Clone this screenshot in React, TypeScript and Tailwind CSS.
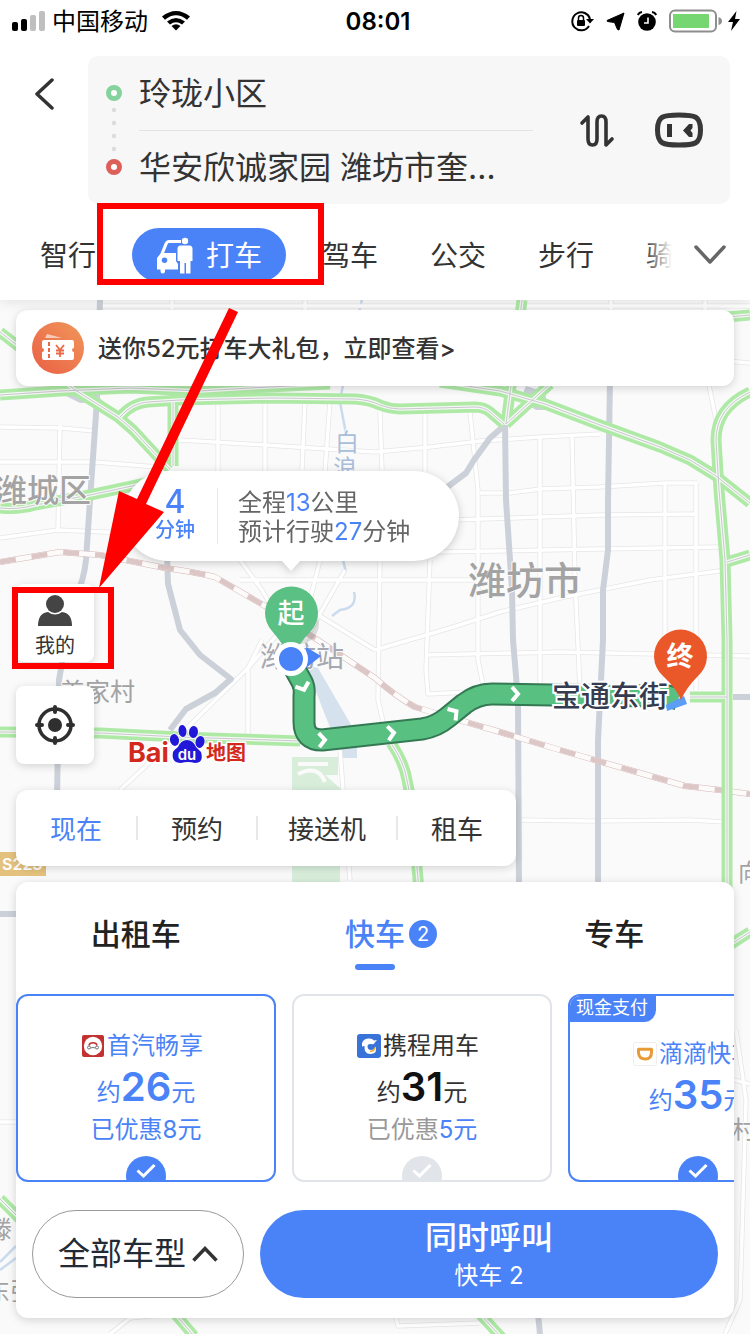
import { useState } from 'react'
import type { ReactNode } from 'react'
import { clsx } from 'clsx'

const ROUTE = 'M291 662 L302 682 Q305 688 304 696 L304 722 Q304 740 322 740 L422 729 Q436 727 448 717 L464 704 Q477 694 492 694 L552 695 L668 696 L678 699'

// 绿色快速路
const HIGHWAYS = [
  'M0 332 L75 390 L118 417 L133 430 L158 457 L170 469',
  'M0 395 L60 391 L130 388 L200 391 L250 388 L330 384',
  'M440 382 L500 391 L545 404 L600 425 L660 447 L690 460 L716 476 L750 503',
  'M120 417 Q132 403 148 402 L180 400 L270 398 L355 399 Q370 400 380 405 Q390 409 400 409 L475 407 Q484 407 490 412 L504 424',
  'M173 402 L173 466',
  'M506 424 L511 386 L522 300',
  'M506 424 L550 384',
  'M750 392 Q716 408 716 440 L719 490 L725 560 L727 640 L727 890',
  'M0 508 Q18 510 35 505 L90 495 L160 480',
  'M0 732 L100 733 L180 737 L300 741',
  'M690 697 L727 697',
  'M391 743 Q404 762 407 780 L411 800 L419 890',
  'M727 562 L750 555',
  'M727 317 L750 315',
  'M728 946 L750 932',
  'M0 1199 L20 1219',
  'M170 1308 L194 1336',
  'M480 1314 L502 1338',
]

// 灰色主干道
const ARTERIALS = [
  'M100 300 L97 400 L90 500 L86 560 Q84 580 76 596 L66 640 L59 680 L57 800',
  'M167 555 L168 584 L180 630 L200 655 L231 679 L215 693 L186 709 L170 730',
  'M505 425 L506 500 L510 560 L512 590 L513 640 L518 700 L519 890',
  'M610 380 L608 500 L608 550 L603 590 L603 640 L598 740 L598 890',
  'M505 425 L490 438 L474 460 L466 473 L446 488',
  'M733 697 L750 697',
  'M0 914 L18 914',
  'M538 1314 L540 1334',
]

const STREETS = [
  'M100 306 L750 306', 'M172 300 L172 320', 'M305 300 L305 320', 'M611 300 L611 320', 'M705 300 L705 320',
  'M0 427 L60 428 L95 431', 'M0 462 L95 462 L170 468', 'M60 425 L58 530', 'M0 538 L58 530 L150 534',
  'M218 402 L218 472', 'M265 402 L265 472', 'M305 400 L302 470', 'M330 400 L325 472',
  'M180 440 L265 445 L375 452 L430 447 L480 441 L540 437 L600 434',
  'M380 412 L382 470', 'M425 412 L425 472', 'M470 412 L478 490 L478 660 L484 690',
  'M540 436 L540 690', 'M572 435 L573 480 L575 580 L580 690',
  'M480 493 L510 493 L540 489 L600 487 L665 483 L697 483',
  'M455 520 L540 517 L600 515 L697 514', 'M435 552 L600 549 L720 547',
  'M665 483 L665 690', 'M696 483 L696 690',
  'M375 650 L450 628 L500 612 L560 598 L650 580 L727 570',
  'M425 655 L560 652 L750 656', 'M240 580 L375 580 L500 580',
  'M380 560 L378 700 L386 735', 'M430 560 L426 670 L428 694 L470 692',
  'M517 820 L590 821 L690 820 L725 822',
  'M240 560 L262 590 L290 640', 'M320 560 L310 600 L290 640', 'M345 570 L322 610 L300 650',
  'M310 610 L375 650', 'M262 640 L248 668 L248 735', 'M290 620 L248 668 L190 725 L120 790',
  'M340 750 L350 880', 'M0 1122 L18 1122', 'M734 1080 L750 1084', 'M736 1030 L746 1100 L740 1300 L725 1334',
  'M714 360 L750 363', 'M706 370 L716 420',
  'M110 1334 L130 1318 L170 1314', 'M395 1314 L398 1326 L480 1323',
]

const RAIL = 'M0 562 L60 552 L100 555 L165 568 Q195 572 215 577 L265 606 L330 648 L375 678 Q395 696 415 707 L435 713 L500 732 L560 750 L640 773 L685 786 L720 790 L750 794'

const CHEVRONS = [
  { x: 303, y: 687, r: 70 },
  { x: 322, y: 740, r: -3 },
  { x: 391, y: 733, r: -6 },
  { x: 454, y: 713, r: -35 },
  { x: 515, y: 694, r: 0 },
]

const SERVICE_TABS = [
  { label: '现在', width: 'w-30' },
  { label: '预约', width: 'w-30' },
  { label: '接送机', width: 'w-35' },
  { label: '租车', width: 'w-30' },
]

type Car = {
  name: string
  price: number
  off?: number
  tag?: string
  checked: boolean
  logo: ReactNode
}

const CARS: Car[] = [
  { name: '首汽畅享', price: 26, off: 8, checked: true, logo: <ShouqiLogo /> },
  { name: '携程用车', price: 31, off: 5, checked: false, logo: <CtripLogo /> },
  { name: '滴滴快车', price: 35, tag: '现金支付', checked: true, logo: <DidiLogo /> },
]

function ShouqiLogo() {
  return (
    <svg className="size-6 shrink-0" viewBox="0 0 24 24" aria-hidden="true">
      <rect x="1" y="1" width="22" height="22" rx="2" fill="#c2302f" />
      <circle cx="12" cy="12" r="9.200" fill="#fff" />
      <path d="M8 11.500 Q8.500 8.800 12 8.800 Q15.500 8.800 16 11.500" fill="none" stroke="#c2302f" strokeWidth="1.500" />
      <circle cx="8" cy="13.500" r="1.500" fill="none" stroke="#777" />
      <circle cx="16" cy="13.500" r="1.500" fill="none" stroke="#777" />
      <path d="M9.500 14 Q12 13 14.500 14" fill="none" stroke="#777" />
    </svg>
  )
}

function CtripLogo() {
  return (
    <svg className="size-6 shrink-0" viewBox="0 0 24 24" aria-hidden="true">
      <rect width="24" height="24" rx="3" fill="#3873d9" />
      <path d="M5 9.500 Q6 5 11 4.500 Q15 4 17 6.500 L20 6 L17.500 9 Q17 11 14 10 Q11 9.500 10.500 12 Q10.500 16 14 16 Q17 16 18.500 12.500 Q21 19 14 20 Q7 20.500 7.500 12 L5 12.500 Z" fill="#fff" />
      <path d="M13 17.500 Q17.500 17 18 13.500" fill="none" stroke="#f5a623" strokeWidth="1.600" />
    </svg>
  )
}

function DidiLogo() {
  return (
    <svg className="size-6 shrink-0" viewBox="0 0 24 24" aria-hidden="true">
      <rect x=".5" y=".5" width="23" height="23" rx="2" fill="#fff" stroke="#eee" />
      <path d="M10 7.200 H18.500 V10 Q18.500 17 12.500 17 Q6 17 5.500 11 V7.200 H10" fill="none" stroke="#e89b36" strokeWidth="3" strokeLinejoin="round" />
    </svg>
  )
}

function StatusBar() {
  return (
    <div className="grid h-10 grid-cols-3 items-center pr-2.5 pl-3 text-black">
      <div className="flex items-center">
        <svg className="h-5 w-[34px]" viewBox="0 0 34 20" aria-hidden="true">
          <rect x="0" y="11" width="6" height="9" rx="2" />
          <rect x="9" y="8" width="6" height="12" rx="2" />
          <rect x="18" y="4" width="6" height="16" rx="2" fill="#bfbfbf" />
          <rect x="27" y="0" width="6" height="20" rx="2" fill="#bfbfbf" />
        </svg>
        <span className="ml-1.5 pt-0.5 text-2xl leading-10">中国移动</span>
        <svg className="ml-3.5 h-5 w-7" viewBox="0 0 28 20" aria-hidden="true">
          <path d="M0 5.500 Q14 -5.500 28 5.500 L25 8.700 Q14 0 3 8.700 Z" />
          <path d="M5 10.500 Q14 3.500 23 10.500 L20 13.500 Q14 9 8 13.500 Z" />
          <path d="M9.500 15 Q14 11.500 18.500 15 L14 19.500 Z" />
        </svg>
      </div>
      <span className="pt-0.5 pl-1 text-center text-2xl leading-10 font-semibold">08:01</span>
      <div className="flex items-center justify-end">
        <svg className="h-[22px] w-6" viewBox="0 0 24 22" aria-hidden="true">
          <path d="M19 16 A9 9 0 1 1 20 9" fill="none" stroke="#000" strokeWidth="2" />
          <path d="M16 9 H24 L20 13.500 Z" />
          <rect x="7" y="10" width="8" height="6" rx="1" />
          <path d="M8.500 10 V8 Q8.500 5.500 11 5.500 Q13.500 5.500 13.500 8 V10" fill="none" stroke="#000" strokeWidth="1.500" />
        </svg>
        <svg className="ml-3 size-[19px]" viewBox="0 0 19 19" aria-hidden="true">
          <path d="M18 1 L13 18 L11.500 17.500 L8.500 10.500 L1.500 9.500 L1 8.500 Z" strokeLinejoin="round" stroke="#000" />
        </svg>
        <svg className="ml-3 size-5" viewBox="0 0 20 20" aria-hidden="true">
          <circle cx="10" cy="11" r="8.800" />
          <path d="M.8 4 Q2 1.500 5 1 M19.200 4 Q18 1.500 15 1" fill="none" stroke="#000" strokeWidth="2" />
          <path d="M11 6.500 V12 H7" fill="none" stroke="#fff" strokeWidth="1.600" />
        </svg>
        <svg className="ml-3 h-6 w-[53px]" viewBox="0 0 53 24" aria-hidden="true">
          <rect x="1" y="1.500" width="46" height="21" rx="5" fill="#fff" stroke="#8e8e8e" strokeWidth="2" />
          <rect x="4" y="5" width="36" height="14" fill="#76d672" />
          <path d="M49.500 8 Q53 9 53 12 Q53 15 49.500 16 Z" fill="#8e8e8e" />
        </svg>
        <svg className="ml-1.5 h-5 w-3" viewBox="0 0 12 20" aria-hidden="true">
          <path d="M8.500 0 L0 11 H5 L3 20 L12 8 H7 Z" />
        </svg>
      </div>
    </div>
  )
}

function Header() {
  return (
    <header className="relative z-10 bg-white shadow-[0_2px_12px_rgba(0,0,0,0.1)]">
      <StatusBar />
      <div className="mt-4 mr-5 flex items-start">
        <button className="flex h-[76px] w-22 items-center justify-center" aria-label="返回">
          <svg className="h-8 w-5" viewBox="0 0 20 32" fill="none" aria-hidden="true">
            <path d="M18 2 L3 16 L18 30" stroke="#333" strokeWidth="3.500" strokeLinecap="round" strokeLinejoin="round" />
          </svg>
        </button>
        <div className="flex h-37 flex-1 items-center rounded-[10px] bg-[#f7f7f7] pl-4.5">
          <svg className="h-[92px] w-4" viewBox="0 0 16 92" aria-hidden="true">
            <circle cx="8" cy="9" r="5.500" fill="#fff" stroke="#84d29e" strokeWidth="5" />
            <circle cx="8" cy="83" r="5.500" fill="#fff" stroke="#dd5f59" strokeWidth="5" />
            {[26, 39, 52, 65].map(y => <circle key={y} cx="8" cy={y} r="2.200" fill="#dcdcdc" />)}
          </svg>
          <div className="ml-[17px] w-[394px]">
            <p className="h-[75px] border-b border-[#e3e3e3] text-[32px] leading-[76px]">玲珑小区</p>
            <p className="h-[73px] truncate text-[32px] leading-[73px]">华安欣诚家园 潍坊市奎…</p>
          </div>
          <div className="ml-auto flex items-center gap-10 pr-[27px]">
            <button aria-label="交换起终点">
              <svg className="block h-9 w-9" viewBox="0 0 36 36" fill="none" aria-hidden="true">
                <path d="M3 11 L9 5 V27 Q9 33 13.500 33 Q18 33 18 27 V10 Q18 4 22.500 4 Q27 4 27 10 V33 L33 27" stroke="#333" strokeWidth="3.600" strokeLinecap="round" strokeLinejoin="round" />
              </svg>
            </button>
            <button aria-label="语音助手">
              <svg className="block h-9 w-12" viewBox="0 0 48 36" fill="none" aria-hidden="true">
                <path d="M24 3 C40 3 45.500 4 45.500 18 C45.500 32 40 33 24 33 C8 33 2.500 32 2.500 18 C2.500 4 8 3 24 3 Z" stroke="#383838" strokeWidth="5" />
                <rect x="12" y="12" width="5" height="13" fill="#333" />
                <path d="M34 12 h3.500 v4 l-2 2.500 l2 2.500 v4 h-3.500 l-6 -6.500 z" fill="#333" />
              </svg>
            </button>
          </div>
        </div>
      </div>
      <div className="flex pt-6 pb-4.5">
        <nav className="relative flex flex-1 items-center gap-13 overflow-hidden pl-10 text-[28px] whitespace-nowrap">
          <button className="pt-0.5">智行</button>
          <button className="-mx-4 flex h-[54px] items-center gap-3 rounded-full bg-[#4a83f7] px-6 pt-0.5 text-white">
            <svg className="h-[38px] w-[38px]" viewBox="0 0 38 38" aria-hidden="true">
              <path d="M25 4.500 H13 Q11 4.500 10 7 L6 17" fill="none" stroke="#fff" strokeWidth="3.200" />
              <path fillRule="evenodd" d="M5 16 H20 V24 L22 27 V32.500 H9 V34 Q9 36.500 6.500 36.500 Q4.500 36.500 4.500 34 V32.500 H1 V21 Z M8.500 20.500 A2.700 2.700 0 1 0 8.500 26 A2.700 2.700 0 1 0 8.500 20.500 Z" fill="#fff" />
              <circle cx="29" cy="4" r="3.200" fill="#fff" />
              <path d="M24.500 8.500 H33.500 Q36.500 8.500 36.500 12 V24 H34.500 V36.500 H30 V26 H28.500 V36.500 H24 V24 H21.500 V12 Q21.500 8.500 24.500 8.500 Z" fill="#fff" />
            </svg>
            打车
          </button>
          <button className="pt-0.5">驾车</button>
          <button className="pt-0.5">公交</button>
          <button className="pt-0.5">步行</button>
          <button className="pt-0.5">骑行</button>
          <span className="absolute inset-y-0 right-0 w-7 bg-linear-to-r from-white/0 to-white" />
        </nav>
        <button className="flex w-[78px] items-center pl-5.5" aria-label="展开">
          <svg className="h-5 w-8" viewBox="0 0 32 20" fill="none" aria-hidden="true">
            <path d="M2 2 L16 17 L30 2" stroke="#666" strokeWidth="3.500" strokeLinecap="round" strokeLinejoin="round" />
          </svg>
        </button>
      </div>
    </header>
  )
}

function MapCanvas() {
  return (
    <svg
      className="absolute inset-0 h-full w-full bg-[#fafafa]"
      viewBox="0 300 750 1034"
      preserveAspectRatio="xMinYMin slice"
      role="img"
      aria-label="路线地图"
    >
      {/* 水系和绿地 */}
      <path d="M306 665 L318 668 L357 735 V758 H343 L325 715 Z" fill="#d5e2ee" />
      <path d="M292 757 H338 V775 H325 L342 790 H292 Z M292 865 H340 V885 H292 Z" fill="#d8eedb" />
      <path d="M298 764 H328 M298 774 Q318 764 325 782" stroke="#fafafa" strokeWidth="4" fill="none" />
      <path d="M364 290 L342 390 L340 402 L346 434 M343 560 L346 572 M354 592 Q358 608 340 610 L332 616 M0 1262 L16 1246 M0 1270 L16 1258" fill="none" stroke="#cbdbee" strokeWidth="2.500" />
      <path d="M66 396 L80 403 L104 402 L94 393 Z M526 386 L545 392 L548 410 L536 410 L520 400 Z" fill="#ccd1da" />

      <g fill="none" strokeLinejoin="round">
        {STREETS.map(d => <path key={d} d={d} stroke="#e6e6e6" strokeWidth="5" />)}
        {STREETS.map(d => <path key={d} d={d} stroke="#fff" strokeWidth="3.500" />)}
        {ARTERIALS.map(d => <path key={d} d={d} stroke="#ccd1d9" strokeWidth="6" />)}
        <path d={RAIL} stroke="#d6b8b8" strokeWidth="6" />
        <path d={RAIL} stroke="#fdfafa" strokeWidth="5" />
        <path d={RAIL} stroke="#dcc6c6" strokeWidth="5" strokeDasharray="16 16" />
        {HIGHWAYS.map(d => <path key={d} d={d} stroke="#aeeaa6" strokeWidth="11" />)}
        {HIGHWAYS.map(d => <path key={d} d={d} stroke="#f5f8f5" strokeWidth="3.500" />)}
        {HIGHWAYS.map(d => <path key={d} d={d} stroke="#c8c8cc" strokeWidth="1" />)}
      </g>

      <g fill="#a3a3a3" stroke="#fafafa" strokeWidth="2" paintOrder="stroke">
        <text x="-5" y="502" fontSize="32" fontWeight="500">潍城区</text>
        <text x="468" y="594" fontSize="38" fontWeight="500">潍坊市</text>
        <text x="260" y="667" fontSize="28" fill="#a5a8b0">潍坊站</text>
        <text x="60" y="701" fontSize="25">姜家村</text>
        <text x="738" y="881" fontSize="24">向</text>
        <text x="732" y="1138" fontSize="24">村</text>
        <text x="-12" y="1238" fontSize="24">滕</text>
        <text x="-14" y="1300" fontSize="24">东张</text>
        <text x="335" y="451" fontSize="24" fill="#a9bedb">白</text>
        <text x="333" y="477" fontSize="24" fill="#a9bedb">浪</text>
      </g>
      <rect x="-4" y="852" width="50" height="24" fill="#e4c27e" />
      <text x="2" y="870" fontSize="16" fontWeight="600" fill="#fff">S223</text>

      {/* 路线 */}
      <g fill="none" strokeLinejoin="round">
        <path d={ROUTE} stroke="#347953" strokeWidth="23" />
        <path d={ROUTE} stroke="#58c181" strokeWidth="19" />
        {CHEVRONS.map(c => (
          <path key={c.x} d="M-3 -7 L3 0 L-3 7" stroke="#fff" strokeWidth="4" strokeLinejoin="miter" transform={`translate(${c.x} ${c.y}) rotate(${c.r})`} />
        ))}
      </g>
      <text x="552" y="707" fontSize="29" fill="#363c50" stroke="#fff" strokeWidth="4" paintOrder="stroke" fontWeight="500">宝通东街</text>

      {/* 终点 */}
      <path d="M666 705 L684 696 L687 704 L667 711 Z" fill="#5c9df5" />
      <path d="M681 700 Q676 688 663 676 A26.500 26.500 0 1 1 698 676 Q686 688 681 700 Z" fill="#ea582a" />
      <text x="680" y="666" fontSize="27" fontWeight="700" fill="#fff" textAnchor="middle">终</text>

      {/* 起点和当前位置 */}
      <circle cx="299" cy="624" r="20" fill="#000" opacity=".12" />
      <path d="M291 658 L282 644 Q278 638 272 631 A26.500 26.500 0 1 1 311 631 Q304 638 300 644 Z" fill="#5ac083" />
      <text x="291" y="623" fontSize="27" fontWeight="500" fill="#fff" textAnchor="middle">起</text>
      <path d="M306 647 L321 656 L306 668 Z" fill="#4a83f7" />
      <circle cx="291" cy="659" r="14.500" fill="#4a83f7" stroke="#fff" strokeWidth="5" />

      {/* 百度地图 logo */}
      <g fontWeight="700" stroke="#fff" strokeWidth="3" paintOrder="stroke">
        <text x="128" y="762" fontSize="27" fill="#d3291c">Bai</text>
        <text x="206" y="760" fontSize="20" fill="#d3291c">地图</text>
      </g>
      <g fill="#2219d8" stroke="#fff" strokeWidth="1.500" paintOrder="stroke">
        <ellipse cx="174.500" cy="740" rx="4.500" ry="6" transform="rotate(-12 174.500 740)" />
        <ellipse cx="182.500" cy="731" rx="4" ry="6" transform="rotate(-6 182.500 731)" />
        <ellipse cx="193.500" cy="732" rx="4.500" ry="6" transform="rotate(8 193.500 732)" />
        <ellipse cx="200" cy="742" rx="4.500" ry="6" transform="rotate(15 200 742)" />
        <path d="M187 740 Q193 740 196 747 L201 752 Q204 763 195 763 Q188 761 181 763 Q171 763 173 752 Q174 750 178 747 Q181 740 187 740 Z" />
      </g>
      <text x="187" y="760" fontSize="15" fontWeight="600" fill="#fff" textAnchor="middle">du</text>
    </svg>
  )
}

function TripBubble() {
  return (
    <div className="absolute top-[171px] left-[123px] flex h-[90px] w-[336px] items-center rounded-full bg-white pl-8 drop-shadow-[0_2px_4px_rgba(0,0,0,0.2)]">
      <div className="w-10 pb-1 text-center text-[#4a83f7]">
        <p className="text-[32px] leading-8 font-medium">4</p>
        <p className="text-xl leading-6 font-medium">分钟</p>
      </div>
      <span className="ml-5.5 h-14 w-px bg-[#e8e8e8]" />
      <p className="ml-5 pt-0.5 text-2xl leading-[29px] whitespace-nowrap text-[#666]">
        全程<span className="text-[#4a83f7]">13</span>公里
        <br />
        预计行驶<span className="text-[#4a83f7]">27</span>分钟
      </p>
      <svg className="absolute top-[89px] left-[158px] h-[11px] w-5" viewBox="0 0 20 11" aria-hidden="true">
        <path d="M0 0 H20 L10 11 Z" fill="#fff" />
      </svg>
    </div>
  )
}

function CarCard({ car, onToggle }: { car: Car; onToggle: () => void }) {
  const on = car.checked
  return (
    <button
      onClick={onToggle}
      aria-pressed={on}
      className={clsx(
        'relative flex h-47 w-65 shrink-0 flex-col items-center overflow-hidden rounded-xl border-2 bg-white text-2xl',
        car.tag ? 'pt-10' : 'pt-8',
        on ? 'border-[#4a83f7] text-[#4a83f7]' : 'border-[#e1e5e9] text-[#333]',
      )}
    >
      {car.tag && (
        <span className="absolute -top-0.5 -left-0.5 h-7 rounded-br-xl bg-[#4a83f7] px-2 text-lg leading-7 text-white">{car.tag}</span>
      )}
      <span className="flex items-center gap-0.5 pr-2 leading-9">{car.logo}{car.name}</span>
      <span className="flex items-baseline leading-[46px]">
        约<b className={clsx('text-[40px] font-semibold', !on && 'text-[#111]')}>{car.price}</b>元
      </span>
      {car.off && (
        <span className={clsx('leading-7', !on && 'text-[#999]')}>
          已优惠<span className="text-[#4a83f7]">{car.off}元</span>
        </span>
      )}
      <span className={clsx('absolute -bottom-4 flex size-10 justify-center rounded-full pt-2', on ? 'bg-[#4a83f7]' : 'bg-[#e1e5e9]')}>
        <svg className="h-3.5 w-5" viewBox="0 0 20 14" fill="none" aria-hidden="true">
          <path d="M1.500 6.500 L7.500 12 L18.500 1" stroke="#fff" strokeWidth="3" />
        </svg>
      </span>
    </button>
  )
}

function BookingPanel() {
  const [cars, setCars] = useState(CARS)

  function toggle(i: number) {
    setCars(cars.map((c, n) => (n === i ? { ...c, checked: !c.checked } : c)))
  }

  return (
    <section className="mx-4 mt-4 overflow-hidden rounded-xl bg-white pb-5 shadow-[0_2px_10px_rgba(0,0,0,0.16)]">
      <div className="grid h-28 grid-cols-3 text-[30px] font-medium text-[#222]">
        <button className="h-26">出租车</button>
        <button className="relative flex h-26 items-center justify-center text-[#4a83f7]">
          <span className="relative">
            快车
            <span className="absolute top-2 left-full ml-1 size-7 rounded-full bg-[#4a83f7] text-center text-xl leading-7 font-normal text-white">2</span>
          </span>
          <span className="absolute bottom-4 h-1.5 w-10 rounded-full bg-[#4a83f7]" />
        </button>
        <button className="h-26">专车</button>
      </div>
      <div className="flex gap-4 overflow-hidden">
        {cars.map((car, i) => (
          <CarCard key={car.name} car={car} onToggle={() => toggle(i)} />
        ))}
      </div>
      <div className="mx-4 mt-7 flex gap-4">
        <button className="flex h-22 w-53 items-center justify-center gap-1.5 rounded-full border border-[#999] text-[32px] text-[#222a36]">
          全部车型
          <svg className="h-4 w-[26px]" viewBox="0 0 26 16" fill="none" aria-hidden="true">
            <path d="M1.500 14.500 L13 2.500 L24.500 14.500" stroke="#333" strokeWidth="3.500" />
          </svg>
        </button>
        <button className="flex h-22 flex-1 flex-col items-center justify-center rounded-full bg-[#4a83f7] pt-1 text-white">
          <span className="text-[32px] leading-10 font-medium">同时呼叫</span>
          <span className="text-2xl leading-9">快车 2</span>
        </button>
      </div>
    </section>
  )
}

// 红色标注
function Annotations() {
  return (
    <div className="pointer-events-none absolute inset-0 z-20">
      <div className="absolute top-[203px] left-[97px] h-[82px] w-[227px] border-6 border-[#ff0000]" />
      <div className="absolute top-[587px] left-[12px] h-[82px] w-[102px] border-6 border-[#ff0000]" />
      <svg className="absolute top-[300px] left-[90px] h-[290px] w-[160px]" viewBox="90 300 160 290" aria-hidden="true">
        <path d="M229 308 L238 312 L146 504 L164 512 L99 588 L119 491 L137 499 Z" fill="#ff0000" />
      </svg>
    </div>
  )
}

export default function App() {
  return (
    <div className="relative flex min-h-screen flex-col overflow-hidden bg-white font-[Inter,'Noto_Sans_CJK_SC',sans-serif] text-[#333]">
      <Header />
      <main className="relative flex flex-1 flex-col pb-4">
        <MapCanvas />
        <TripBubble />
        <div className="relative flex flex-1 flex-col">
          <a href="#gift" className="mx-4 mt-2.5 flex h-19 items-center gap-3.5 rounded-xl bg-white px-4 text-2xl font-medium shadow-[0_2px_8px_rgba(0,0,0,0.16)]">
            <svg className="size-13" viewBox="0 0 52 52" aria-hidden="true">
              <defs>
                <linearGradient id="coupon" x1="0" y1="1" x2="1" y2="0">
                  <stop offset="0" stopColor="#ea5f45" />
                  <stop offset="1" stopColor="#f0975a" />
                </linearGradient>
              </defs>
              <circle cx="26" cy="26" r="26" fill="url(#coupon)" />
              <path d="M13 16 L15 12 L30 16 Z" fill="#fff" opacity=".6" />
              <path d="M12 18 H40 Q42 18 42 20 V26 A2 2 0 0 0 42 30 V36 Q42 38 40 38 H12 Q10 38 10 36 V30 A2 2 0 0 0 10 26 V20 Q10 18 12 18 Z" fill="#fff" />
              <path d="M17 20 V38" stroke="#ea6a48" strokeWidth="2" strokeDasharray="4 2" />
              <path d="M24 23 L28 28 L32 23 M28 28 V35 M24 28.500 H32 M24 31.500 H32" stroke="#ea6a48" strokeWidth="1.800" fill="none" />
            </svg>
            <span className="pt-0.5">送你52元打车大礼包，立即查看&gt;</span>
          </a>
          <div className="mt-auto ml-4 flex w-[78px] flex-col gap-6">
            <button className="flex h-[78px] flex-col items-center rounded-lg bg-white pt-2.5 text-xl shadow-[0_2px_8px_rgba(0,0,0,0.16)]">
              <svg className="h-8 w-9 shrink-0" viewBox="0 0 36 32" fill="#444" aria-hidden="true">
                <circle cx="18" cy="10" r="9" />
                <path d="M1 32 Q1 19 11 18 Q18 23 25 18 Q35 19 35 32 Z" />
              </svg>
              <span className="mt-1 leading-8">我的</span>
            </button>
            <button className="flex h-[78px] items-center justify-center rounded-lg bg-white shadow-[0_2px_8px_rgba(0,0,0,0.16)]" aria-label="定位">
              <svg className="size-10" viewBox="0 0 40 40" fill="none" stroke="#2f2f2f" aria-hidden="true">
                <circle cx="20" cy="20" r="16" strokeWidth="3.500" />
                <circle cx="20" cy="20" r="7" fill="#2f2f2f" stroke="none" />
                <path d="M20 2 V7 M20 33 V38 M2 20 H7 M33 20 H38" strokeWidth="4" strokeLinecap="round" />
              </svg>
            </button>
          </div>
        </div>
        <div className="relative mt-6.5 ml-4 flex h-19 w-fit items-center rounded-xl bg-white text-[26px] shadow-[0_2px_8px_rgba(0,0,0,0.16)]">
          {SERVICE_TABS.map((tab, i) => (
            <button
              key={tab.label}
              className={clsx('h-6 pt-0.5 leading-6', tab.width, i === 0 ? 'text-[#4a83f7]' : 'border-l-2 border-[#e8e8e8]')}
            >
              {tab.label}
            </button>
          ))}
        </div>
        <div className="relative">
          <BookingPanel />
        </div>
      </main>
      <Annotations />
    </div>
  )
}
